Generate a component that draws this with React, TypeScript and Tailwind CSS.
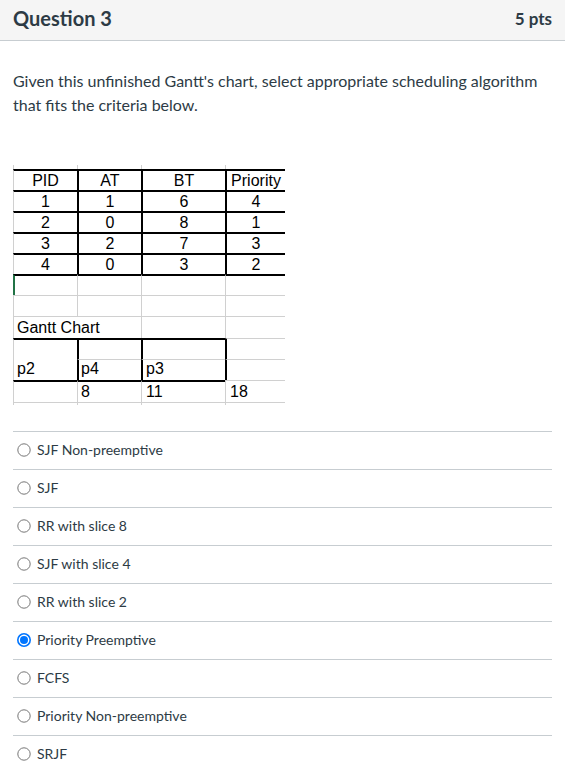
import React from "react";

type L = "k" | "K" | "g" | "n" | "G";

const topCls: Record<L, string> = {
  k: "border-t-2 border-t-black",
  K: "border-t-[3px] border-t-black",
  g: "border-t border-t-[#d0d0d0]",
  n: "",
  G: "",
};
const leftCls: Record<L, string> = {
  k: "border-l-2 border-l-black",
  K: "border-l-[3px] border-l-black",
  g: "border-l border-l-[#d0d0d0]",
  n: "",
  G: "border-l-2 border-l-[#217346]",
};

function Cell({
  t,
  l,
  children,
  extra = "",
}: {
  t: L;
  l: L;
  children?: React.ReactNode;
  extra?: string;
}) {
  return (
    <div className={`${topCls[t]} ${leftCls[l]} flex ${extra}`}>{children}</div>
  );
}

function Radio({ checked }: { checked?: boolean }) {
  return (
    <svg width="14" height="14" viewBox="0 0 14 14" className="shrink-0">
      {checked ? (
        <>
          <circle cx="7" cy="7" r="6.2" fill="white" stroke="#0075ff" strokeWidth="1.6" />
          <circle cx="7" cy="7" r="4" fill="#0075ff" />
        </>
      ) : (
        <circle cx="7" cy="7" r="6.2" fill="white" stroke="#767676" strokeWidth="1" />
      )}
    </svg>
  );
}

const data = [
  ["PID", "AT", "BT", "Priority"],
  ["1", "1", "6", "4"],
  ["2", "0", "8", "1"],
  ["3", "2", "7", "3"],
  ["4", "0", "3", "2"],
];

const options = [
  "SJF Non-preemptive",
  "SJF",
  "RR with slice 8",
  "SJF with slice 4",
  "RR with slice 2",
  "Priority Preemptive",
  "FCFS",
  "Priority Non-preemptive",
  "SRJF",
];

export default function App() {
  return (
    <div className="w-[565px] min-h-[779px] bg-white font-['Lato',sans-serif] text-[#2d3b45]">
      <div className="h-[41px] bg-[#f5f5f5] border-b border-[#c7cdd1] flex items-center justify-between px-[13px] pb-[4px]">
        <div className="text-[20px] font-bold leading-none">Question 3</div>
        <div className="text-[17px] font-bold leading-none">5 pts</div>
      </div>
      <div className="px-[13px]">
        <p className="mt-[28px] text-[16px] leading-[24px]">
          Given this unfinished Gantt's chart, select appropriate scheduling algorithm that fits the criteria below.
        </p>

        <div className="mt-[48px] w-[272px] grid grid-cols-[64px_64px_84px_60px] grid-rows-[4px_21px_21px_21px_21px_21px_21px_21px_22px_21px_21px_22px_3px] font-['Liberation_Sans',Arial,sans-serif] text-[16px] leading-none text-black">
          {/* strip */}
          <Cell t="n" l="g" />
          <Cell t="n" l="g" />
          <Cell t="n" l="g" />
          <Cell t="n" l="g" />
          {/* data rows */}
          {data.map((row, ri) =>
            row.map((v, ci) => (
              <Cell key={`${ri}-${ci}`} t="k" l={ci === 0 ? "g" : "k"} extra="items-center justify-center">
                {v}
              </Cell>
            ))
          )}
          {/* empty row after table */}
          <Cell t="k" l="G" />
          <Cell t="k" l="g" />
          <Cell t="k" l="g" />
          <Cell t="k" l="g" />
          {/* empty gray row */}
          <Cell t="g" l="g" />
          <Cell t="g" l="g" />
          <Cell t="g" l="g" />
          <Cell t="g" l="g" />
          {/* Gantt Chart label */}
          <Cell t="g" l="g" extra="col-span-2 items-center pl-[3px] whitespace-nowrap">
            Gantt Chart
          </Cell>
          <Cell t="g" l="g" />
          <Cell t="g" l="g" />
          {/* Gantt row 1 */}
          <Cell t="k" l="g" extra="row-span-2 items-end pl-[3px] pb-[3px]">
            p2
          </Cell>
          <Cell t="k" l="k" />
          <Cell t="k" l="k" />
          <Cell t="g" l="k" />
          {/* Gantt row 2 */}
          <Cell t="g" l="k" extra="items-end pl-[2px] pb-[3px]">
            p4
          </Cell>
          <Cell t="g" l="k" extra="items-end pl-[3px] pb-[3px]">
            p3
          </Cell>
          <Cell t="g" l="k" />
          {/* times */}
          <Cell t="k" l="g" />
          <Cell t="k" l="g" extra="items-center pl-[3px]">
            8
          </Cell>
          <Cell t="k" l="g" extra="items-center pl-[4px]">
            11
          </Cell>
          <Cell t="g" l="g" extra="items-center pl-[4px]">
            18
          </Cell>
          {/* tail */}
          <Cell t="g" l="g" />
          <Cell t="g" l="g" />
          <Cell t="g" l="g" />
          <Cell t="g" l="g" />
        </div>

        <div className="mt-[26px]">
          {options.map((o, i) => (
            <div key={i} className="h-[38px] border-t border-[#c7cdd1] flex items-center pl-[4px] pb-[2px] gap-[6px] text-[14px] leading-[20px]">
              <Radio checked={o === "Priority Preemptive"} />
              <span>{o}</span>
            </div>
          ))}
        </div>
      </div>
    </div>
  );
}
